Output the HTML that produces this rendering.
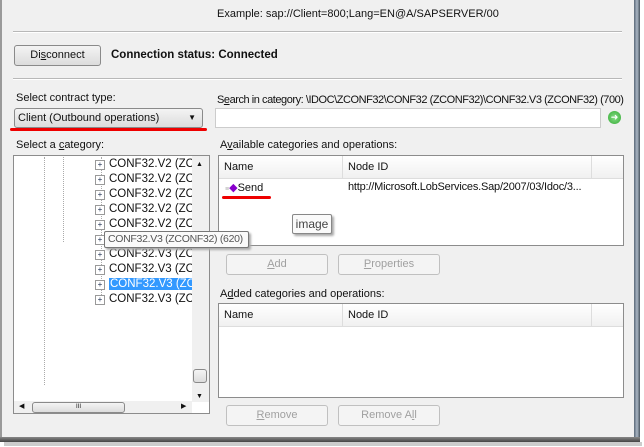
<!DOCTYPE html>
<html><head><style>
body{margin:0;width:644px;height:447px;background:#fff;position:relative;overflow:hidden;font-family:"Liberation Sans",sans-serif;font-size:11px;color:#111}
.a{position:absolute;white-space:nowrap}
.win{left:0;top:0;width:636px;height:440px;background:#f0f0f0;border-left:2px solid #9a9a9a;box-sizing:border-box}
.rb{left:634px;top:0;width:6px;height:442px;background:linear-gradient(90deg,#5a6878,#aab6c4,#4a5560)}
.bb{left:0;top:437px;width:640px;height:5px;background:linear-gradient(#888,#444)}
.sh{left:4px;top:442px;width:638px;height:4px;background:#ccc}
.sep{height:1px;background:#b8b8b8;border-bottom:1px solid #fff}
.btn{border:1px solid #8a8a8a;border-radius:3px;background:linear-gradient(#f4f4f4,#dcdcdc);text-align:center;box-sizing:border-box}
.dis{border:1px solid #c0c0c0;border-radius:3px;background:#f4f4f4;color:#a0a0a0;text-align:center;box-sizing:border-box}
.box{background:#fff;border:1px solid #8c8c8c;box-sizing:border-box}
.row{left:96px;font-size:11.5px}
.pl{display:inline-block;width:8px;height:8px;border:1px solid #999;background:#fff;font-size:8px;line-height:8px;text-align:center;color:#235;margin-right:4px;vertical-align:0}
.hdr{background:linear-gradient(#fff,#f0f0f0);border-bottom:1px solid #ddd}
.red{background:#e00;height:3px;border-radius:2px}
</style></head><body>
<div class="a win"></div>
<div class="a rb"></div><div class="a bb"></div><div class="a sh"></div>
<div class="a" style="left:217px;top:8px">Example: sap://Client=800;Lang=EN@A/SAPSERVER/00</div>
<div class="a sep" style="left:13px;top:31px;width:609px"></div>
<div class="a btn" style="left:14px;top:45px;width:87px;height:21px;line-height:19px">Di<u>s</u>connect</div>
<div class="a" style="left:111px;top:49px;font-weight:bold;font-size:11.5px">Connection status: Connected</div>
<div class="a sep" style="left:13px;top:78px;width:609px"></div>
<div class="a" style="left:16px;top:92px">Select contract type:</div>
<div class="a btn" style="left:14px;top:108px;width:189px;height:20px;line-height:18px;text-align:left;padding-left:3px">Client (Outbound operations)<span class="a" style="right:6px;top:0;font-size:8px">▼</span></div>
<div class="a red" style="left:10px;top:128px;width:197px"></div>
<div class="a" style="left:16px;top:139px">Select a <u>c</u>ategory:</div>
<div class="a box" style="left:13px;top:155px;width:197px;height:259px"></div>
<div class="a" style="left:44px;top:157px;height:228px;border-left:1px dotted #aaa"></div>
<div class="a" style="left:63px;top:157px;height:85px;border-left:1px dotted #aaa"></div>
<div class="a" style="left:101px;top:157px;height:148px;border-left:1px dotted #aaa"></div>
<div class="a" style="left:14px;top:156px;width:178px;height:152px;overflow:hidden">
<div class="a row" style="left:81px;top:2px"><span class="pl">+</span>CONF32.V2 (ZCONF32)</div>
<div class="a row" style="left:81px;top:17px"><span class="pl">+</span>CONF32.V2 (ZCONF32)</div>
<div class="a row" style="left:81px;top:32px"><span class="pl">+</span>CONF32.V2 (ZCONF32)</div>
<div class="a row" style="left:81px;top:47px"><span class="pl">+</span>CONF32.V2 (ZCONF32)</div>
<div class="a row" style="left:81px;top:62px"><span class="pl">+</span>CONF32.V2 (ZCONF32)</div>
<div class="a row" style="left:81px;top:77px"><span class="pl">+</span></div>
<div class="a row" style="left:81px;top:92px"><span class="pl">+</span>CONF32.V3 (ZCONF32)</div>
<div class="a row" style="left:81px;top:107px"><span class="pl">+</span>CONF32.V3 (ZCONF32)</div>
<div class="a row" style="left:81px;top:122px"><span class="pl">+</span><span style="background:#3399ff;color:#fff;padding:0 1px">CONF32.V3 (ZCONF32)</span></div>
<div class="a row" style="left:81px;top:137px"><span class="pl">+</span>CONF32.V3 (ZCONF32)</div>
</div>
<div class="a" style="left:192px;top:156px;width:17px;height:246px;background:#f0f0f0"></div>
<div class="a" style="left:196px;top:161px;font-size:7px">▲</div>
<div class="a" style="left:196px;top:393px;font-size:7px">▼</div>
<div class="a btn" style="left:193px;top:369px;width:14px;height:14px"></div>
<div class="a" style="left:14px;top:401px;width:178px;height:12px;background:#f0f0f0"></div>
<div class="a btn" style="left:32px;top:402px;width:93px;height:11px;font-size:6px;line-height:9px">III</div>
<div class="a" style="left:19px;top:402px;font-size:7px">◀</div><div class="a" style="left:181px;top:402px;font-size:7px">▶</div>
<div class="a" style="left:217px;top:94px;letter-spacing:-0.45px">S<u>e</u>arch in category: \IDOC\ZCONF32\CONF32 (ZCONF32)\CONF32.V3 (ZCONF32) (700)</div>
<div class="a box" style="left:215px;top:108px;width:386px;height:20px;border-color:#ccc"></div>
<div class="a" style="left:608px;top:111px;width:13px;height:13px;border-radius:50%;background:radial-gradient(#8d8,#3a3);color:#fff;font-size:9px;line-height:13px;text-align:center">➜</div>
<div class="a" style="left:220px;top:139px">A<u>v</u>ailable categories and operations:</div>
<div class="a box" style="left:218px;top:155px;width:406px;height:91px"></div>
<div class="a hdr" style="left:219px;top:156px;width:404px;height:22px"></div>
<div class="a" style="left:342px;top:156px;width:1px;height:22px;background:#ddd"></div>
<div class="a" style="left:591px;top:156px;width:1px;height:22px;background:#ddd"></div>
<div class="a" style="left:224px;top:161px">Name</div><div class="a" style="left:348px;top:161px">Node ID</div>
<div class="a" style="left:225px;top:181px;font-size:11px"><span style="color:#aaa;font-size:7px">≡</span><span style="color:#80c">◆</span>Send</div>
<div class="a" style="left:348px;top:181px;letter-spacing:-0.2px">http://Microsoft.LobServices.Sap/2007/03/Idoc/3...</div>
<div class="a red" style="left:222px;top:196px;width:49px"></div>
<div class="a" style="left:104px;top:231px;width:145px;height:17px;border:1px solid #777;border-radius:2px;background:#fafafa;box-shadow:2px 2px 2px #aaa;color:#555;font-size:10.5px;letter-spacing:-0.3px;line-height:15px;padding-left:3px;box-sizing:border-box;z-index:5">CONF32.V3 (ZCONF32) (620)</div>
<div class="a" style="left:292px;top:214px;width:40px;height:20px;border:1px solid #888;border-radius:2px;background:#fafafa;box-shadow:2px 2px 2px #aaa;color:#444;font-size:12px;line-height:18px;text-align:center;box-sizing:border-box">image</div>
<div class="a dis" style="left:226px;top:254px;width:102px;height:21px;line-height:19px"><u>A</u>dd</div>
<div class="a dis" style="left:338px;top:254px;width:102px;height:21px;line-height:19px"><u>P</u>roperties</div>
<div class="a" style="left:220px;top:288px">A<u>d</u>ded categories and operations:</div>
<div class="a box" style="left:218px;top:303px;width:406px;height:95px"></div>
<div class="a hdr" style="left:219px;top:304px;width:404px;height:22px"></div>
<div class="a" style="left:342px;top:304px;width:1px;height:22px;background:#ddd"></div>
<div class="a" style="left:591px;top:304px;width:1px;height:22px;background:#ddd"></div>
<div class="a" style="left:224px;top:309px">Name</div><div class="a" style="left:348px;top:309px">Node ID</div>
<div class="a dis" style="left:226px;top:405px;width:102px;height:21px;line-height:19px"><u>R</u>emove</div>
<div class="a dis" style="left:338px;top:405px;width:102px;height:21px;line-height:19px">Remove A<u>l</u>l</div>
</body></html>
